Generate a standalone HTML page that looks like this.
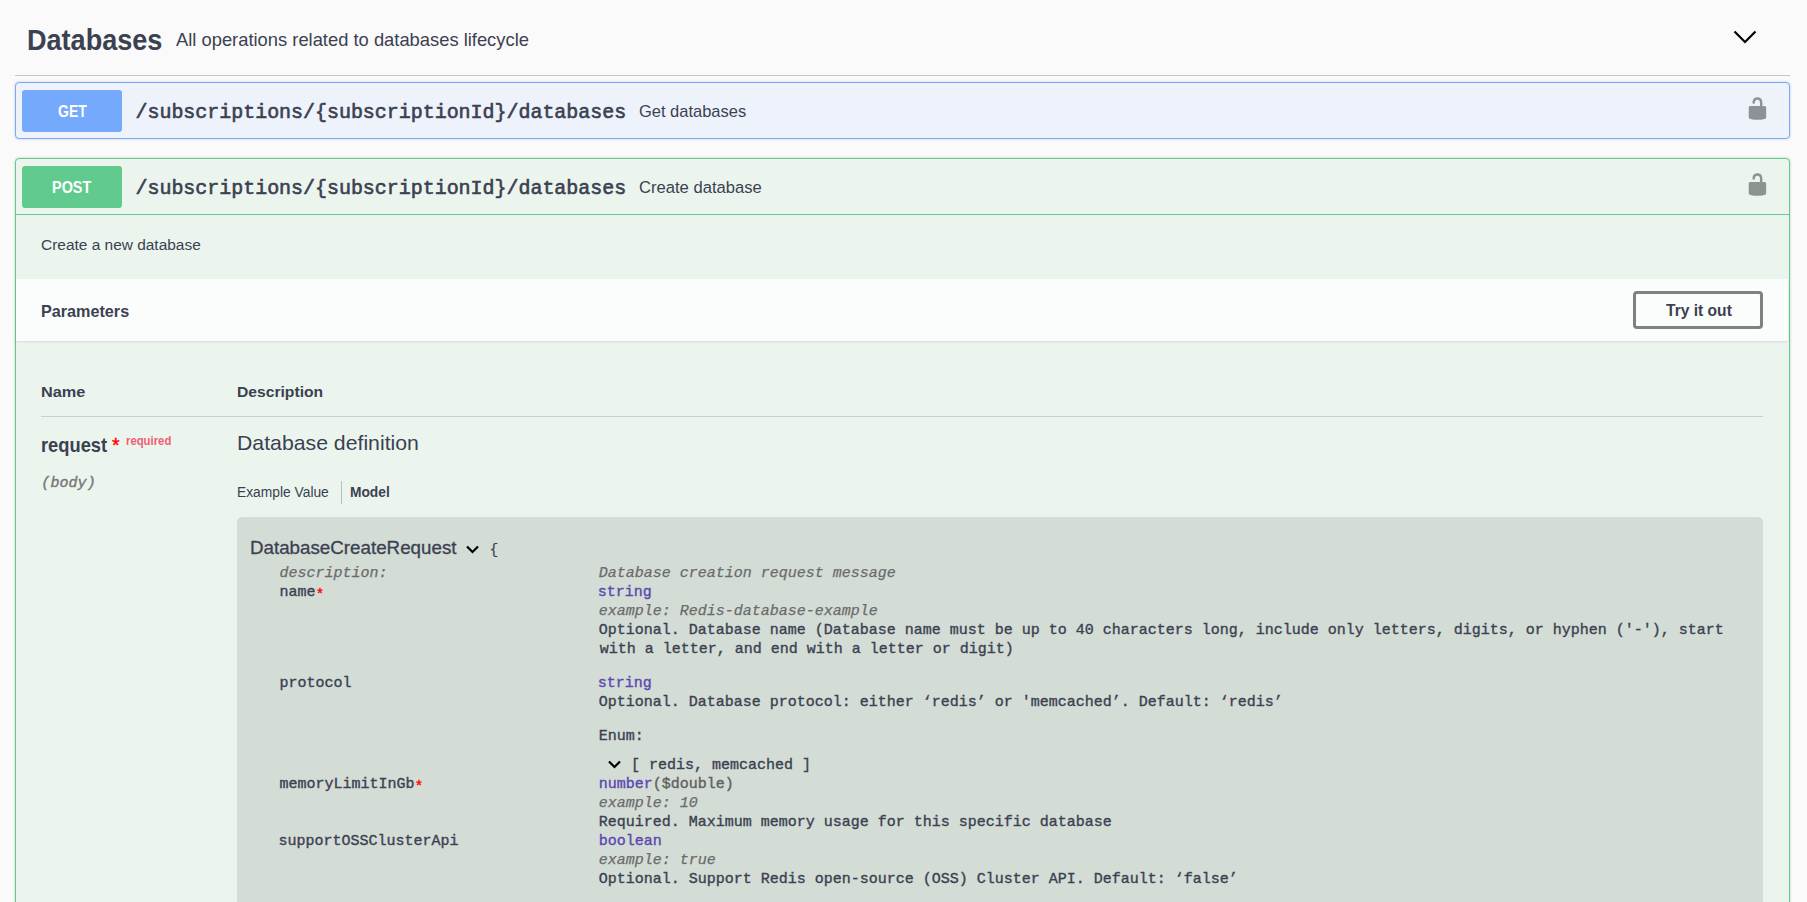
<!DOCTYPE html>
<html><head><meta charset="utf-8">
<style>
html,body{margin:0;padding:0}
body{width:1807px;height:902px;overflow:hidden;background:#fafafa;position:relative;font-family:'Liberation Sans',sans-serif;color:#3b4151}
.t{position:absolute;white-space:nowrap;line-height:1;transform-origin:0 0}
.b{position:absolute;box-sizing:border-box}
</style></head><body>
<!-- header -->
<svg class="b" style="left:1733px;top:30px" width="24" height="15" viewBox="0 0 24 15"><path d="M1.5 1.5 L12 12 L22.5 1.5" fill="none" stroke="#000" stroke-width="2.2"/></svg>
<div class="b" style="left:15px;top:75px;width:1775px;height:1px;background:#c4c6cb"></div>
<!-- GET block -->
<div class="b" style="left:15px;top:82px;width:1775px;height:57px;border:1px solid #74a9fc;background:#eef2fb;border-radius:4px;box-shadow:0 0 3px rgba(0,0,0,.19)"></div>
<div class="b" style="left:22px;top:90px;width:100px;height:42px;background:#74a9fc;border-radius:3px"></div>
<svg class="b" style="left:1745.1px;top:95.9px" width="24.9" height="24.9" viewBox="0 0 20 20"><path fill="#000" fill-opacity=".4" d="M15.8 8H14V5.6C14 2.703 12.665 1 10 1 7.334 1 6 2.703 6 5.6V6h2v-.801C8 3.754 8.797 3 10 3c1.203 0 2 .754 2 2.199V8H4c-.553 0-1 .646-1 1.199V17c0 .549.428 1.139.951 1.307l1.197.387C5.672 18.861 6.55 19 7.1 19h5.8c.549 0 1.428-.139 1.951-.307l1.196-.387c.524-.167.953-.757.953-1.306V9.199C17 8.646 16.352 8 15.8 8z"/></svg>
<!-- POST block -->
<div class="b" style="left:15px;top:158px;width:1775px;height:800px;border:1px solid #61cb8d;background:#ebf5ee;border-radius:4px;box-shadow:0 0 3px rgba(0,0,0,.19)"></div>
<div class="b" style="left:22px;top:166px;width:100px;height:42px;background:#61cb8d;border-radius:3px"></div>
<svg class="b" style="left:1745.1px;top:171.9px" width="24.9" height="24.9" viewBox="0 0 20 20"><path fill="#000" fill-opacity=".4" d="M15.8 8H14V5.6C14 2.703 12.665 1 10 1 7.334 1 6 2.703 6 5.6V6h2v-.801C8 3.754 8.797 3 10 3c1.203 0 2 .754 2 2.199V8H4c-.553 0-1 .646-1 1.199V17c0 .549.428 1.139.951 1.307l1.197.387C5.672 18.861 6.55 19 7.1 19h5.8c.549 0 1.428-.139 1.951-.307l1.196-.387c.524-.167.953-.757.953-1.306V9.199C17 8.646 16.352 8 15.8 8z"/></svg>
<div class="b" style="left:16px;top:214px;width:1773px;height:1px;background:#61cb8d"></div>
<!-- section header -->
<div class="b" style="left:16px;top:279px;width:1772px;height:62px;background:rgba(255,255,255,.8);box-shadow:0 1px 2px rgba(0,0,0,.1)"></div>
<div class="b" style="left:1633px;top:291px;width:130px;height:38px;border:3px solid #808080;border-radius:4px;background:transparent"></div>
<!-- table header line -->
<div class="b" style="left:41px;top:416px;width:1722px;height:1px;background:rgba(59,65,81,.2)"></div>
<!-- divider -->
<div class="b" style="left:341px;top:481px;width:1px;height:23px;background:rgba(59,65,81,.3)"></div>
<!-- model box -->
<div class="b" style="left:237px;top:517px;width:1526px;height:500px;background:rgba(0,0,0,.1);border-radius:5px"></div>
<svg class="b" style="left:465px;top:544px" width="15" height="11" viewBox="0 0 15 11"><path d="M2 2.5 L7.5 8 L13 2.5" fill="none" stroke="#000" stroke-width="2.2"/></svg>
<svg class="b" style="left:607px;top:759px" width="15" height="11" viewBox="0 0 15 11"><path d="M2 2.5 L7.5 8 L13 2.5" fill="none" stroke="#000" stroke-width="2.2"/></svg>
<div class="t" style="font-family:'Liberation Sans', sans-serif;font-size:29.3px;font-weight:bold;left:27.25px;top:25.00px;color:#3b4151;transform:scaleX(0.9238);">Databases</div>
<div class="t" style="font-family:'Liberation Sans', sans-serif;font-size:18.1px;left:175.70px;top:30.58px;color:#3b4151;transform:scaleX(1.0141);">All operations related to databases lifecycle</div>
<div class="t" style="font-family:'Liberation Sans', sans-serif;font-size:17.3px;font-weight:bold;left:57.69px;top:103.16px;color:#fff;transform:scaleX(0.8118);">GET</div>
<div class="t" style="font-family:'Liberation Mono', monospace;font-size:20px;left:135.50px;top:102.58px;color:#3b4151;-webkit-text-stroke:0.6px currentColor;letter-spacing:-0.035px;">/subscriptions/{subscriptionId}/databases</div>
<div class="t" style="font-family:'Liberation Sans', sans-serif;font-size:17px;left:639.33px;top:102.51px;color:#3b4151;transform:scaleX(0.9688);">Get databases</div>
<div class="t" style="font-family:'Liberation Sans', sans-serif;font-size:17px;font-weight:bold;left:52.25px;top:178.51px;color:#fff;transform:scaleX(0.8489);">POST</div>
<div class="t" style="font-family:'Liberation Mono', monospace;font-size:20px;left:135.50px;top:178.58px;color:#3b4151;-webkit-text-stroke:0.6px currentColor;letter-spacing:-0.035px;">/subscriptions/{subscriptionId}/databases</div>
<div class="t" style="font-family:'Liberation Sans', sans-serif;font-size:16.7px;left:638.90px;top:179.96px;color:#3b4151;transform:scaleX(0.9951);">Create database</div>
<div class="t" style="font-family:'Liberation Sans', sans-serif;font-size:15.4px;left:40.50px;top:237.16px;color:#3b4151;transform:scaleX(1.0038);">Create a new database</div>
<div class="t" style="font-family:'Liberation Sans', sans-serif;font-size:17px;font-weight:bold;left:40.55px;top:302.61px;color:#3b4151;transform:scaleX(0.9516);">Parameters</div>
<div class="t" style="font-family:'Liberation Sans', sans-serif;font-size:15.7px;font-weight:bold;left:1665.50px;top:303.41px;color:#3b4151;transform:scaleX(0.9939);">Try it out</div>
<div class="t" style="font-family:'Liberation Sans', sans-serif;font-size:15.3px;font-weight:bold;left:40.64px;top:384.45px;color:#3b4151;transform:scaleX(1.0650);">Name</div>
<div class="t" style="font-family:'Liberation Sans', sans-serif;font-size:15.3px;font-weight:bold;left:236.68px;top:384.45px;color:#3b4151;transform:scaleX(1.0232);">Description</div>
<div class="t" style="font-family:'Liberation Sans', sans-serif;font-size:20.4px;font-weight:bold;left:40.80px;top:434.53px;color:#3b4151;transform:scaleX(0.8972);">request</div>
<div class="t" style="font-family:'Liberation Sans', sans-serif;font-size:19.5px;left:112.10px;top:436.49px;color:#ff0000;-webkit-text-stroke:0.35px currentColor;">*</div>
<div class="t" style="font-family:'Liberation Sans', sans-serif;font-size:13.5px;font-weight:bold;left:125.86px;top:433.87px;color:#ee5f74;transform:scaleX(0.8385);">required</div>
<div class="t" style="font-family:'Liberation Mono', monospace;font-size:15px;font-style:italic;letter-spacing:0.080px;left:41.30px;top:476.01px;color:#777;-webkit-text-stroke:0.4px currentColor;">(body)</div>
<div class="t" style="font-family:'Liberation Sans', sans-serif;font-size:21.1px;left:236.79px;top:432.44px;color:#3b4151;transform:scaleX(1.0073);">Database definition</div>
<div class="t" style="font-family:'Liberation Sans', sans-serif;font-size:14.9px;left:236.87px;top:485.19px;color:#3b4151;transform:scaleX(0.9268);">Example Value</div>
<div class="t" style="font-family:'Liberation Sans', sans-serif;font-size:14.9px;font-weight:bold;left:349.58px;top:485.19px;color:#3b4151;transform:scaleX(0.9244);">Model</div>
<div class="t" style="font-family:'Liberation Sans', sans-serif;font-size:18.4px;left:249.76px;top:538.52px;color:#3b4151;transform:scaleX(1.0200);-webkit-text-stroke:0.3px currentColor;">DatabaseCreateRequest</div>
<div class="t" style="font-family:'Liberation Mono', monospace;font-size:15px;left:489.60px;top:543.01px;color:#3b4151;-webkit-text-stroke:0.1px currentColor;">{</div>
<div class="t" style="font-family:'Liberation Mono', monospace;font-size:15px;font-style:italic;left:279.50px;top:565.51px;color:#6b6b6b;-webkit-text-stroke:0.25px currentColor;">description:</div>
<div class="t" style="font-family:'Liberation Mono', monospace;font-size:15px;left:279.50px;top:584.51px;color:#3b4151;-webkit-text-stroke:0.35px currentColor;">name<span style='color:red;position:relative;top:3.5px'>*</span></div>
<div class="t" style="font-family:'Liberation Mono', monospace;font-size:15px;left:279.50px;top:675.51px;color:#3b4151;-webkit-text-stroke:0.35px currentColor;">protocol</div>
<div class="t" style="font-family:'Liberation Mono', monospace;font-size:15px;left:279.50px;top:776.51px;color:#3b4151;-webkit-text-stroke:0.35px currentColor;">memoryLimitInGb<span style='color:red;position:relative;top:3.5px'>*</span></div>
<div class="t" style="font-family:'Liberation Mono', monospace;font-size:15px;left:278.50px;top:833.51px;color:#3b4151;-webkit-text-stroke:0.35px currentColor;">supportOSSClusterApi</div>
<div class="t" style="font-family:'Liberation Mono', monospace;font-size:15px;font-style:italic;left:598.70px;top:565.51px;color:#6b6b6b;-webkit-text-stroke:0.25px currentColor;">Database creation request message</div>
<div class="t" style="font-family:'Liberation Mono', monospace;font-size:15px;left:597.70px;top:584.51px;color:#5a48b0;-webkit-text-stroke:0.35px currentColor;">string</div>
<div class="t" style="font-family:'Liberation Mono', monospace;font-size:15px;font-style:italic;left:598.70px;top:603.51px;color:#6b6b6b;-webkit-text-stroke:0.25px currentColor;">example: Redis-database-example</div>
<div class="t" style="font-family:'Liberation Mono', monospace;font-size:15px;left:598.70px;top:622.51px;color:#3b4151;-webkit-text-stroke:0.35px currentColor;">Optional. Database name (Database name must be up to 40 characters long, include only letters, digits, or hyphen ('-'), start</div>
<div class="t" style="font-family:'Liberation Mono', monospace;font-size:15px;left:599.70px;top:641.51px;color:#3b4151;-webkit-text-stroke:0.35px currentColor;">with a letter, and end with a letter or digit)</div>
<div class="t" style="font-family:'Liberation Mono', monospace;font-size:15px;left:597.70px;top:675.51px;color:#5a48b0;-webkit-text-stroke:0.35px currentColor;">string</div>
<div class="t" style="font-family:'Liberation Mono', monospace;font-size:15px;left:598.70px;top:694.51px;color:#3b4151;-webkit-text-stroke:0.35px currentColor;">Optional. Database protocol: either ‘redis’ or 'memcached’. Default: ‘redis’</div>
<div class="t" style="font-family:'Liberation Mono', monospace;font-size:15px;left:598.70px;top:728.51px;color:#3b4151;-webkit-text-stroke:0.35px currentColor;">Enum:</div>
<div class="t" style="font-family:'Liberation Mono', monospace;font-size:15px;left:598.70px;top:776.51px;color:#5a48b0;-webkit-text-stroke:0.35px currentColor;">number<span style='color:#606060'>($double)</span></div>
<div class="t" style="font-family:'Liberation Mono', monospace;font-size:15px;font-style:italic;left:598.70px;top:795.51px;color:#6b6b6b;-webkit-text-stroke:0.25px currentColor;">example: 10</div>
<div class="t" style="font-family:'Liberation Mono', monospace;font-size:15px;left:598.70px;top:814.51px;color:#3b4151;-webkit-text-stroke:0.35px currentColor;">Required. Maximum memory usage for this specific database</div>
<div class="t" style="font-family:'Liberation Mono', monospace;font-size:15px;left:598.70px;top:833.51px;color:#5a48b0;-webkit-text-stroke:0.35px currentColor;">boolean</div>
<div class="t" style="font-family:'Liberation Mono', monospace;font-size:15px;font-style:italic;left:598.70px;top:852.51px;color:#6b6b6b;-webkit-text-stroke:0.25px currentColor;">example: true</div>
<div class="t" style="font-family:'Liberation Mono', monospace;font-size:15px;left:598.70px;top:871.51px;color:#3b4151;-webkit-text-stroke:0.35px currentColor;">Optional. Support Redis open-source (OSS) Cluster API. Default: ‘false’</div>
<div class="t" style="font-family:'Liberation Mono', monospace;font-size:15px;left:631.00px;top:757.51px;color:#3b4151;-webkit-text-stroke:0.35px currentColor;">[ redis, memcached ]</div>
</body></html>
